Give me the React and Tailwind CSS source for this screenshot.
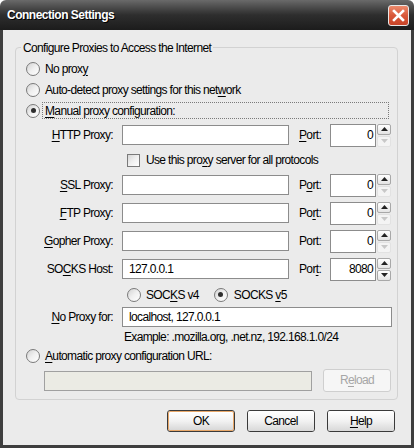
import React from "react";

const U = ({ children }) => <span className="underline underline-offset-[2px]">{children}</span>;

function Radio({ checked }) {
  return (
    <span className="w-[14px] h-[14px] shrink-0 rounded-full border border-[#7a7a7a] bg-linear-to-br from-[#d2d2d2] via-[#f0f0f0] to-white flex items-center justify-center">
      {checked && <span className="w-[5px] h-[5px] rounded-full bg-[#2e2e2e]" />}
    </span>
  );
}

function Spin({ downEnabled }) {
  return (
    <div className="flex flex-col w-[14px] h-[23px] ml-px gap-px">
      <div className="flex-1 border border-[#a8a8a8] rounded-[2px] bg-linear-to-b from-white to-[#e4e4e4] flex items-center justify-center">
        <svg width="7" height="4" viewBox="0 0 7 4"><path d="M0 4 L3.5 0 L7 4 Z" fill="#222" /></svg>
      </div>
      <div className={`flex-1 rounded-[2px] flex items-center justify-center ${downEnabled ? "border border-[#a8a8a8] bg-linear-to-b from-white to-[#e4e4e4]" : "border border-[#e2e2e2] bg-[#f4f4f4]"}`}>
        <svg width="7" height="4" viewBox="0 0 7 4"><path d="M0 0 L7 0 L3.5 4 Z" fill={downEnabled ? "#222" : "#c8c8c8"} /></svg>
      </div>
    </div>
  );
}

function ProxyRow({ label, value = "", port, portLabel, downEnabled }) {
  return (
    <div className="h-[28px] flex items-center">
      <div className="w-[97px] text-right">{label}</div>
      <div className="ml-[9px] w-[167px] h-[20px] border border-[#8c8c8c] bg-white flex items-center pl-[6px]">{value}</div>
      <div className="ml-[10px] w-[31px]">{portLabel}</div>
      <div className="w-[46px] h-[23px] border border-[#8c8c8c] bg-white flex items-center justify-end pr-[2px]">{port}</div>
      <Spin downEnabled={downEnabled} />
    </div>
  );
}

function Button({ children, def, className = "" }) {
  return (
    <div className={`h-[22px] rounded-[3px] border border-[#3a3a3a] flex items-center justify-center ${className}`}>
      <div className={`w-full h-full rounded-[2px] bg-linear-to-b from-white via-[#f2f2f2] to-[#d8d8d8] flex items-center justify-center ${def ? "border-[1.5px] border-[#e8a86a]" : ""}`}>
        {children}
      </div>
    </div>
  );
}

export default function App() {
  return (
    <div className="w-[414px] h-[448px] flex flex-col font-['Liberation_Sans',Arial,sans-serif] text-[12px] tracking-[-0.65px] text-black leading-none select-none">
      <div className="h-[30px] shrink-0 rounded-t-[6px] bg-linear-to-b from-[#6a6a6a] via-[#2e2e2e] to-[#1c1c1c] flex items-center pl-[7px] pr-[5px]">
        <span className="text-white font-bold text-[12px] tracking-[-0.5px] [text-shadow:1px_1px_0_#000]">Connection Settings</span>
        <div className="ml-auto w-[21px] h-[21px] rounded-[3px] border border-[#e8e8e8] bg-linear-to-b from-[#ec8a6c] via-[#d8583a] to-[#c84428] flex items-center justify-center">
          <svg width="13" height="13" viewBox="0 0 13 13">
            <path d="M2 2 L11 11 M11 2 L2 11" stroke="#fff" strokeWidth="2.6" strokeLinecap="square" />
          </svg>
        </div>
      </div>
      <div className="flex-1 flex flex-col bg-[#ebebeb] border-x-[3px] border-b-[3px] border-[#3e3e3e]">
        <div className="relative mt-[17px] ml-[12px] w-[383px] border border-[#d2d2d2] rounded-[4px] pt-[10px] pb-[5px]">
          <div className="absolute -top-[8px] left-[5px] px-[2px] bg-[#ebebeb] h-[15px] flex items-center">Configure Proxies to Access the Internet</div>
          <div className="pl-[10px]">
            <div className="h-[21px] flex items-center gap-[5px]"><Radio /><span>No prox<U>y</U></span></div>
            <div className="h-[21px] flex items-center gap-[5px]"><Radio /><span>Auto-detect proxy settings for this net<U>w</U>ork</span></div>
            <div className="h-[21px] flex items-center gap-[2px]">
              <Radio checked />
              <div className="w-[347px] h-[17px] border border-dotted border-[#7a7a7a] flex items-center pl-[2px]"><span><U>M</U>anual proxy configuration:</span></div>
            </div>
          </div>
          <ProxyRow label={<><U>H</U>TTP Proxy:</>} port="0" portLabel={<><U>P</U>ort:</>} />
          <div className="h-[22px] flex items-center pl-[111px] gap-[6px]">
            <span className="w-[13px] h-[13px] border border-[#7a7a7a] bg-linear-to-br from-[#d6d6d6] via-[#f0f0f0] to-white" />
            <span>Use this pro<U>x</U>y server for all protocols</span>
          </div>
          <ProxyRow label={<><U>S</U>SL Proxy:</>} port="0" portLabel={<>P<U>o</U>rt:</>} />
          <ProxyRow label={<><U>F</U>TP Proxy:</>} port="0" portLabel={<>Po<U>r</U>t:</>} />
          <ProxyRow label={<><U>G</U>opher Proxy:</>} port="0" portLabel={<>Port:</>} />
          <ProxyRow label={<>SO<U>C</U>KS Host:</>} value="127.0.0.1" port="8080" portLabel={<>Por<U>t</U>:</>} downEnabled />
          <div className="h-[23px] flex items-center pl-[111px]">
            <div className="flex items-center gap-[5px]"><Radio /><span>SOC<U>K</U>S v4</span></div>
            <div className="flex items-center gap-[6px] ml-[15px]"><Radio checked /><span>SOCKS <U>v</U>5</span></div>
          </div>
          <div className="h-[22px] flex items-center">
            <div className="w-[97px] text-right"><U>N</U>o Proxy for:</div>
            <div className="ml-[9px] w-[270px] h-[20px] border border-[#8c8c8c] bg-white flex items-center pl-[6px]">localhost, 127.0.0.1</div>
          </div>
          <div className="h-[18px] flex items-center pl-[108px]">Example: .mozilla.org, .net.nz, 192.168.1.0/24</div>
          <div className="h-[20px] flex items-center gap-[5px] pl-[10px]"><Radio /><span><U>A</U>utomatic proxy configuration URL:</span></div>
          <div className="h-[28px] flex items-center pl-[28px]">
            <div className="w-[268px] h-[20px] mt-[2px] border border-[#a0a0a0] bg-[#ebebe4]" />
            <div className="ml-[11px] w-[68px] h-[23px] rounded-[3px] border border-[#cfcfcf] bg-[#f6f6f6] flex items-center justify-center text-[#a6a6a6]">R<U>e</U>load</div>
          </div>
        </div>
        <div className="mt-[10px] flex justify-end pr-[16px] gap-[12px]">
          <Button def className="w-[68px]">OK</Button>
          <Button className="w-[68px]">Cancel</Button>
          <Button className="w-[68px]"><span><U>H</U>elp</span></Button>
        </div>
      </div>
    </div>
  );
}
